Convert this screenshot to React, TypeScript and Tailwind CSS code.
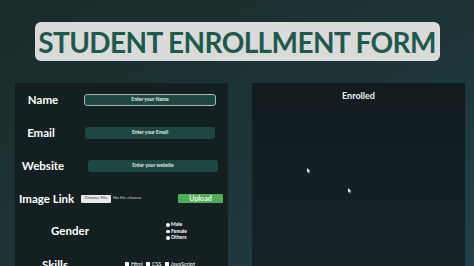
import React from 'react';

const font = { fontFamily: 'Lato, "Open Sans", sans-serif' };

const TextField: React.FC<{ placeholder: string; focused?: boolean; className?: string }> = ({
  placeholder,
  focused,
  className = '',
}) => (
  <div
    className={`h-[12px] w-[130px] flex items-center justify-center rounded-[3px] bg-[#1d4841] text-[5px] text-[#e6eeec] ${
      focused ? 'border border-[#a9b5b2]' : ''
    } ${className}`}
  >
    {placeholder}
  </div>
);

const Pointer: React.FC<{ className: string }> = ({ className }) => (
  <svg viewBox="0 0 6 9" className={`absolute w-[4px] h-[6px] ${className}`}>
    <path d="M0 0 L0 7 L1.8 5.4 L3 8.2 L4 7.8 L2.9 5.1 L5.2 5 Z" fill="#e8eaea" />
  </svg>
);

const App: React.FC = () => {
  return (
    <div
      className="w-[474px] h-[266px] overflow-hidden bg-gradient-to-br from-[#1b2b29] via-[#1d3436] to-[#213f4a] text-white"
      style={font}
    >
      {/* Title */}
      <div className="flex justify-center pt-[22px]">
        <div className="w-[405px] h-[39px] rounded-[6px] bg-[#dadada] flex items-center justify-center">
          <h1 className="text-[28px] font-bold text-[#1e5a4c] tracking-[-0.6px] leading-none whitespace-nowrap">
            STUDENT ENROLLMENT FORM
          </h1>
        </div>
      </div>

      <div className="flex gap-[24px] pl-[15px] mt-[22px]">
        {/* Form panel */}
        <div className="w-[213px] h-[200px] bg-[#131f21] font-bold">
          <div className="flex items-center h-[33px]">
            <span className="w-[56px] text-center text-[11.5px]">Name</span>
            <TextField placeholder="Enter your Name" focused className="ml-[13px] w-[132px]" />
          </div>
          <div className="flex items-center h-[33px]">
            <span className="w-[52px] text-center text-[11.5px]">Email</span>
            <TextField placeholder="Enter your Email" className="ml-[18px] w-[128px]" />
          </div>
          <div className="flex items-center h-[33px]">
            <span className="w-[56px] text-center text-[11.5px]">Website</span>
            <TextField placeholder="Enter your website" className="ml-[17px] w-[128px]" />
          </div>
          <div className="flex items-center h-[33px]">
            <span className="ml-[4px] w-[54px] text-[11.5px] whitespace-nowrap">Image Link</span>
            <div className="ml-[8px] flex items-center font-normal">
              <span className="h-[8px] w-[30px] flex items-center justify-center bg-[#e9e9e9] text-[#333] text-[4.5px] rounded-[1px]">
                Choose File
              </span>
              <span className="ml-[2px] text-[4.5px] text-[#d0d6d6]">No file chosen</span>
            </div>
            <button className="ml-auto mr-[5px] h-[9px] w-[45px] rounded-[1px] bg-[#4caf55] text-[7px] font-bold text-[#eef7ee] leading-none">
              Upload
            </button>
          </div>
          <div className="flex items-center h-[33px]">
            <span className="w-[110px] text-center text-[11.5px] -mt-[2px]">Gender</span>
            <div className="ml-[41px] flex flex-col gap-[1px] text-[5px] leading-[5.5px]">
              {['Male', 'Female', 'Others'].map((g) => (
                <label key={g} className="flex items-center gap-[1.5px]">
                  <span className="w-[3.5px] h-[3.5px] rounded-full bg-white" />
                  {g}
                </label>
              ))}
            </div>
          </div>
          <div className="flex items-center h-[33px]">
            <span className="w-[80px] text-center text-[11.5px]">Skills</span>
            <div className="ml-[30px] flex items-center gap-[3px] text-[5.5px] font-normal">
              {['Html', 'CSS', 'JavaScript'].map((s) => (
                <label key={s} className="flex items-center gap-[2px]">
                  <span className="w-[4px] h-[6px] bg-white rounded-[0.5px]" />
                  {s}
                </label>
              ))}
            </div>
          </div>
        </div>

        {/* Enrolled panel */}
        <div className="relative w-[213px] h-[200px] bg-gradient-to-b from-[#121c1f] to-[#15232a]">
          <p className="pt-[6px] text-center text-[9px] font-bold text-[#eef0f0]">Enrolled</p>
          <Pointer className="left-[55px] top-[85px]" />
          <Pointer className="left-[96px] top-[105px]" />
        </div>
      </div>
    </div>
  );
};

export default App;
